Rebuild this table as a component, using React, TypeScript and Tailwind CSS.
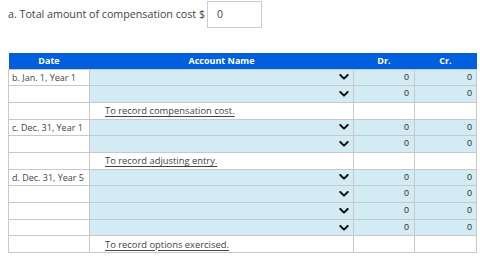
import React from 'react';

type Row =
  | { kind: 'entry'; date?: string }
  | { kind: 'note'; text: string };

const rows: Row[] = [
  { kind: 'entry', date: 'b. Jan. 1, Year 1' },
  { kind: 'entry' },
  { kind: 'note', text: 'To record compensation cost.' },
  { kind: 'entry', date: 'c. Dec. 31, Year 1' },
  { kind: 'entry' },
  { kind: 'note', text: 'To record adjusting entry.' },
  { kind: 'entry', date: 'd. Dec. 31, Year 5' },
  { kind: 'entry' },
  { kind: 'entry' },
  { kind: 'entry' },
  { kind: 'note', text: 'To record options exercised.' },
];

const Chevron = () => (
  <svg width="10" height="6" viewBox="0 0 10 6" className="shrink-0">
    <path d="M1.3 1 L5 4.6 L8.7 1" fill="none" stroke="#111" strokeWidth="2" strokeLinecap="round" strokeLinejoin="round" />
  </svg>
);

const App: React.FC = () => {
  return (
    <div className="w-[480px] h-[258px] bg-white overflow-hidden text-[#333]" style={{ fontFamily: '"Open Sans", "Liberation Sans", sans-serif' }}>
      {/* Total cost line */}
      <div className="flex items-center pl-2 pt-px h-[28px]">
        <span className="text-[10.7px] text-[#444] mr-[2px]">a. Total amount of compensation cost $</span>
        <div className="w-[55px] h-[27px] border border-[#c8cdd2] flex items-center pl-[9px] text-[10.5px] text-[#444]">0</div>
      </div>

      {/* Journal table */}
      <table className="ml-2 mt-[25px] w-[468px] border-collapse table-fixed">
        <colgroup>
          <col className="w-[81px]" />
          <col className="w-[264px]" />
          <col className="w-[61px]" />
          <col className="w-[62px]" />
        </colgroup>
        <thead>
          <tr className="h-[16px] bg-[#005fdc] text-white text-[9px] font-bold">
            <th className="p-0 font-bold">Date</th>
            <th className="p-0 font-bold">Account Name</th>
            <th className="p-0 font-bold">Dr.</th>
            <th className="p-0 font-bold">Cr.</th>
          </tr>
        </thead>
        <tbody className="text-[9.4px]">
          {rows.map((r, i) => (
            <tr key={i} className="h-[16.7px]">
              <td className="border border-[#c8c8c8] px-[3px] py-0 whitespace-nowrap text-[9px] text-[#444]">
                {r.kind === 'entry' ? r.date ?? '' : ''}
              </td>
              {r.kind === 'entry' ? (
                <>
                  <td className="border border-[#c8c8c8] bg-[#d2ebf4] p-0">
                    <div className="flex justify-end pr-[4px]">
                      <Chevron />
                    </div>
                  </td>
                  <td className="border border-[#c8c8c8] bg-[#d2ebf4] py-0 pr-[5px] text-right text-[9px]" style={{ fontFamily: '"Liberation Sans", Arial, sans-serif' }}>0</td>
                  <td className="border border-[#c8c8c8] bg-[#d2ebf4] py-0 pr-[4px] text-right text-[9px]" style={{ fontFamily: '"Liberation Sans", Arial, sans-serif' }}>0</td>
                </>
              ) : (
                <>
                  <td className="border border-[#c8c8c8] py-0 pl-[15px] leading-none">
                    <span className="underline underline-offset-[1.5px] text-[#444]">{r.text}</span>
                  </td>
                  <td className="border border-[#c8c8c8] p-0" />
                  <td className="border border-[#c8c8c8] p-0" />
                </>
              )}
            </tr>
          ))}
        </tbody>
      </table>
    </div>
  );
};

export default App;
